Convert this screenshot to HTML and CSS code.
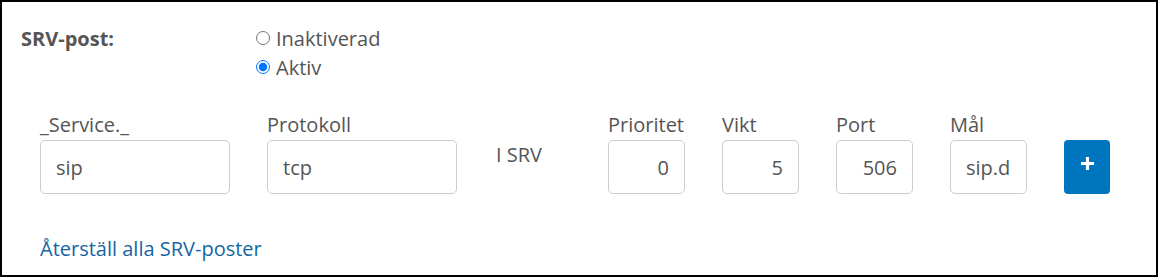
FILE: index.html
```html
<!DOCTYPE html>
<html lang="sv">
<head>
<meta charset="utf-8">
<title>SRV-post</title>
<link rel="stylesheet" href="styles.css">
</head>
<body>
<div class="panel">
  <div class="status-row">
    <div class="status-label">SRV-post:</div>
    <div class="radios">
      <label class="radio"><input type="radio" name="srv" value="off"><span>Inaktiverad</span></label>
      <label class="radio"><input type="radio" name="srv" value="on" checked><span>Aktiv</span></label>
    </div>
  </div>
  <div class="fields">
    <div class="field w-wide">
      <div class="field-label">_Service._</div>
      <input class="text-input" type="text" value="sip">
    </div>
    <div class="field w-wide">
      <div class="field-label">Protokoll</div>
      <input class="text-input" type="text" value="tcp">
    </div>
    <div class="field w-narrow">
      <div class="field-label">&nbsp;</div>
      <div class="static-text">I SRV</div>
    </div>
    <div class="field w-narrow">
      <div class="field-label">Prioritet</div>
      <input class="text-input num" type="text" value="0">
    </div>
    <div class="field w-narrow">
      <div class="field-label">Vikt</div>
      <input class="text-input num" type="text" value="5">
    </div>
    <div class="field w-narrow">
      <div class="field-label">Port</div>
      <input class="text-input num" type="text" value="506">
    </div>
    <div class="field w-narrow">
      <div class="field-label">Mål</div>
      <input class="text-input" type="text" value="sip.d">
    </div>
    <div class="field w-btn">
      <div class="field-label">&nbsp;</div>
      <button class="add-btn" type="button" aria-label="Lägg till">
        <svg width="13" height="13" viewBox="0 0 13 13"><path d="M4.9 0h3.2v4.9H13v3.2H8.1V13H4.9V8.1H0V4.9h4.9z" fill="#fff"/></svg>
      </button>
    </div>
  </div>
  <a class="reset-link" href="#">Återställ alla SRV-poster</a>
</div>
</body>
</html>
```

FILE: styles.css
```css
html, body {
  margin: 0;
  padding: 0;
  background: #fff;
}

body {
  font-family: "Open Sans", "Liberation Sans", sans-serif;
  font-size: 20px;
  color: #555;
}

.panel {
  box-sizing: border-box;
  width: 1158px;
  height: 277px;
  border: 2px solid #000;
  padding: 22px 0 0 19px;
}

.status-row {
  display: flex;
  line-height: 29px;
}

.status-label {
  width: 235px;
  font-weight: 700;
}

.radios {
  display: flex;
  flex-direction: column;
}

.radio {
  display: flex;
  align-items: center;
  gap: 6px;
}

.radio input {
  margin: 0;
  width: 14px;
  height: 14px;
  position: relative;
  top: -1px;
}

.fields {
  display: flex;
  gap: 37px;
  margin: 29px 0 0 19px;
}

.field {
  display: flex;
  flex-direction: column;
}

.w-wide { width: 190px; }
.w-narrow { width: 77px; }
.w-btn { width: 46px; }

.field-label {
  line-height: 28px;
  margin-bottom: 1px;
  white-space: nowrap;
}

.text-input {
  box-sizing: border-box;
  width: 100%;
  height: 54px;
  border: 1px solid #ccc;
  border-radius: 5px;
  padding: 0 15px;
  font-family: inherit;
  font-size: 20px;
  color: #555;
  background: #fff;
  outline: none;
}

.text-input.num {
  text-align: right;
}

.static-text {
  line-height: 29px;
  padding-left: 2px;
  white-space: nowrap;
}

.add-btn {
  width: 46px;
  height: 54px;
  border: none;
  border-radius: 4px;
  background: #0075bf;
  display: flex;
  align-items: flex-start;
  justify-content: center;
  padding: 17px 0 0;
  cursor: pointer;
}

.add-btn svg {
  display: block;
}

.reset-link {
  display: inline-block;
  margin: 40px 0 0 19px;
  line-height: 29px;
  color: #1565a3;
  text-decoration: none;
}
```
